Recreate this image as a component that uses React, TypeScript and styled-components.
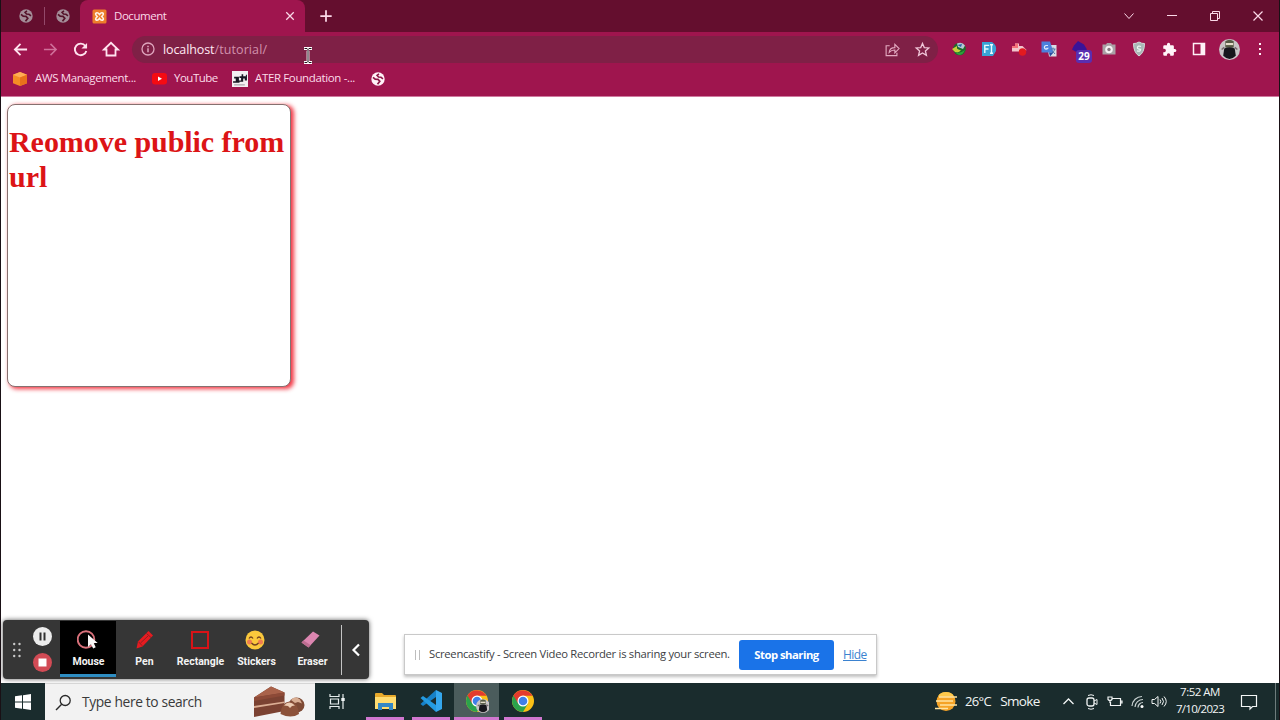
import React from "react";
import styled, { createGlobalStyle, css } from "styled-components";

const GlobalStyle = createGlobalStyle`
  * { box-sizing: border-box; }
  body { margin: 0; background: #fff; font-family: "Open Sans", "Noto Sans", sans-serif; }
`;

const Screen = styled.div`
  width: 1280px;
  height: 720px;
  display: flex;
  flex-direction: column;
  overflow: hidden;
  background: #fff;
  border-left: 1px solid #191015;
  border-right: 1px solid #191015;
`;

const Text = styled.span<{ $size?: number; $ls?: number; $w?: number; $color?: string }>`
  display: block;
  flex: none;
  white-space: pre;
  line-height: 1.3;
  font-size: ${(p) => p.$size ?? 12}px;
  letter-spacing: ${(p) => p.$ls ?? 0}px;
  font-weight: ${(p) => p.$w ?? 400};
  color: ${(p) => p.$color ?? "inherit"};
`;

const Cell = styled.div<{ $w?: number }>`
  width: ${(p) => p.$w ?? 30}px;
  height: 100%;
  flex: none;
  display: flex;
  align-items: center;
  justify-content: center;
  svg { display: block; flex: none; overflow: visible; }
`;

/* Browser chrome */
const TabStrip = styled.header`
  flex: none;
  height: 32px;
  display: flex;
  background: #640e2e;
  color: #fbd9e8;
`;
const PinnedTabs = styled.div`
  width: 79px;
  height: 32px;
  flex: none;
  display: flex;
  align-items: center;
  padding-left: 7px;
`;
const TabDivider = styled.div`
  width: 1px;
  height: 18px;
  background: #93496a;
`;
const ActiveTab = styled.div`
  width: 225px;
  height: 32px;
  flex: none;
  display: flex;
  align-items: center;
  padding-left: 12px;
  border-radius: 8px 8px 0 0;
  background: #9f154e;
`;
const TabTitle = styled.div`
  width: 178px;
  padding-left: 7px;
`;
const WindowControls = styled.div`
  margin-left: auto;
  display: flex;
`;
const Toolbar = styled.div`
  flex: none;
  height: 34px;
  display: flex;
  align-items: center;
  padding: 0 4px;
  background: #9f154e;
  color: #ffe3ef;
`;
const AddressBar = styled.div`
  width: 806px;
  height: 27px;
  margin: 0 6px;
  padding-right: 1px;
  flex: none;
  display: flex;
  align-items: center;
  border-radius: 14px;
  background: #7f2046;
  color: #e3a9c0;
`;
const Url = styled.div`
  display: flex;
  flex: 1;
  padding-top: 2px;
`;
const Bookmarks = styled.nav`
  flex: none;
  height: 31px;
  display: flex;
  align-items: center;
  padding: 0 0 5px 11px;
  background: #9f154e;
  border-bottom: 1px solid #cf7a9f;
  color: #fbdce9;
`;
const Bookmark = styled.div<{ $w: number }>`
  width: ${(p) => p.$w}px;
  flex: none;
  display: flex;
  align-items: center;
  gap: 7px;
  svg { display: block; flex: none; }
`;
const Extension = styled.div`
  position: relative;
  width: 30px;
  height: 34px;
  display: flex;
  align-items: center;
  justify-content: center;
`;
const Badge = styled.div`
  position: absolute;
  left: 12px;
  top: 18px;
  width: 16px;
  height: 13px;
  border-radius: 3px;
  background: #5a2eb0;
  color: #fff;
  font: 700 10px/13px "Open Sans", sans-serif;
  text-align: center;
`;

/* Page */
const Page = styled.main`
  flex: 1;
  display: flex;
  flex-direction: column;
  justify-content: space-between;
  background: #fff;
`;
const Card = styled.section`
  width: 284px;
  height: 283px;
  margin: 7px 0 0 6px;
  padding: 19px 0 0 1px;
  border: 1px solid #86706f;
  border-radius: 8px;
  background: #fff;
  box-shadow: 2.5px 1.5px 4px rgba(240, 20, 35, 0.85);
`;
const Heading = styled.h1`
  margin: 0;
  font: 700 30px/35px "Liberation Serif", serif;
  letter-spacing: -0.05px;
  color: #dc1416;
`;
const Floating = styled.div`
  display: flex;
  align-items: flex-start;
  height: 63px;
  padding-left: 2px;
`;
const RecorderBar = styled.div`
  width: 366px;
  height: 59px;
  flex: none;
  display: flex;
  align-items: center;
  border-radius: 4px;
  background: #363636;
  box-shadow: 0 0 5px rgba(0, 0, 0, 0.65);
  color: #fff;
`;
const RecordButtons = styled.div`
  width: 29px;
  height: 59px;
  display: flex;
  flex-direction: column;
  align-items: center;
  justify-content: center;
  gap: 7px;
  padding-right: 6px;
  padding-bottom: 1px;
`;
const Tool = styled.div<{ $active?: boolean }>`
  width: 56px;
  height: 56px;
  margin-bottom: 1px;
  padding-top: 8px;
  display: flex;
  flex-direction: column;
  align-items: center;
  gap: 4px;
  border-bottom: 3px solid transparent;
  svg { display: block; }
  ${(p) =>
    p.$active &&
    css`
      background: #000;
      border-bottom-color: #2e8dc2;
    `}
`;
const ToolName = styled.div`
  font: 700 10.5px/14px Roboto, sans-serif;
  padding-left: 1px;
  color: #f4f4f4;
`;
const ToolDivider = styled.div`
  width: 1px;
  height: 50px;
  margin-left: 1px;
  background: #c4c4c4;
`;
const SharingBar = styled.div`
  width: 473px;
  height: 41px;
  margin: 14px 0 0 35px;
  flex: none;
  display: flex;
  align-items: center;
  background: #fff;
  border: 1px solid #c9c9c9;
  box-shadow: 0 2px 3px rgba(0, 0, 0, 0.25);
  color: #3c4043;
`;
const Grip = styled.div`
  width: 5px;
  height: 10px;
  margin: 0 9px 0 10px;
  border: solid #bdbdbd;
  border-width: 0 1px;
`;
const SharingMessage = styled.div`
  width: 310px;
`;
const StopButton = styled.button`
  width: 95px;
  height: 30px;
  padding: 0;
  border: 0;
  border-radius: 3px;
  background: #1a73e8;
  color: #fff;
  font: 700 11.3px/30px "Open Sans", sans-serif;
  letter-spacing: -0.6px;
  letter-spacing: -0.5px;
`;
const HideLink = styled.a`
  margin-left: 9px;
  color: #3b82d0;
  text-decoration: underline;
  font-size: 12px;
  letter-spacing: -0.6px;
`;

/* Taskbar */
const Taskbar = styled.footer`
  flex: none;
  height: 37px;
  display: flex;
  background: #1a2c2d;
  color: #f2f5f5;
`;
const SearchBox = styled.div`
  width: 270px;
  height: 37px;
  flex: none;
  display: flex;
  align-items: center;
  padding: 0 8px 0 10px;
  background: #f2f2f2;
  border-top: 1px solid #d6d6d6;
  color: #3a3a3a;
`;
const SearchHint = styled.div`
  flex: 1;
  padding-left: 10px;
`;
const TaskApp = styled.div<{ $w: number; $active?: boolean; $gap: number }>`
  width: ${(p) => p.$w}px;
  height: 37px;
  margin-left: ${(p) => p.$gap}px;
  flex: none;
  display: flex;
  align-items: center;
  justify-content: center;
  border-bottom: 3px solid #d077cf;
  padding-top: 2px;
  background: ${(p) => (p.$active ? "#4b5c5c" : "transparent")};
`;
const Tray = styled.div`
  margin-left: auto;
  display: flex;
  align-items: center;
`;
const Clock = styled.div`
  width: 58px;
  display: flex;
  flex-direction: column;
  align-items: center;
  gap: 2px;
  padding-bottom: 1px;
`;
const PeekEdge = styled.div`
  width: 4px;
  height: 37px;
  border-left: 1px solid #6f7c7c;
`;

/* The I-beam pointer floats over the address bar. */
const Pointer = styled.div`
  position: absolute;
  left: 303px;
  top: 47px;
`;

const Svg = ({ s = 16, w, h, vb, children }: { s?: number; w?: number; h?: number; vb?: string; children: React.ReactNode }) => (
  <svg width={w ?? s} height={h ?? s} viewBox={vb ?? `0 0 ${w ?? s} ${h ?? s}`} fill="none" stroke="none">
    {children}
  </svg>
);

const Globe = ({ color, ink }: { color: string; ink: string }) => (
  <Svg s={14}>
    <circle cx="7" cy="7" r="6.7" fill={color} />
    <path d="M2 5.300L4.200 7.200 7 7.300 8.800 9.200 6.500 12.300" stroke={ink} strokeWidth="1.700" />
    <path d="M8 1.800L6 3.300 7.500 5 10 5.300 12 6.800" stroke={ink} strokeWidth="1.500" />
  </Svg>
);

const Line = ({ d, s = 16, sw = 1.5, color = "currentColor" }: { d: string; s?: number; sw?: number; color?: string }) => (
  <Svg s={s} vb="0 0 16 16">
    <path d={d} stroke={color} strokeWidth={sw} />
  </Svg>
);

const Portrait = ({ s = 20 }: { s?: number }) => (
  <Svg s={s} vb="0 0 20 20">
    <circle cx="10" cy="10" r="10" fill="#c9c4c6" />
    <path d="M6 2.2Q10-1 14 2.2V8H6z" fill="#555a45" />
    <path d="M6.5 3.8h7v2h-7z" fill="#e5ddcb" />
    <path d="M5 9q5-2.5 10 0l1 7q-6 6-12 0z" fill="#17161c" />
    <path d="M2.5 10l2.5-2M17.5 10L15 8" stroke="#756a6c" strokeWidth="1.5" />
  </Svg>
);

const Chrome = () => (
  <Svg s={24}>
    <circle cx="12" cy="12" r="11" fill="#fbc116" />
    <path d="M12 12L2.5 6.5A11 11 0 0 0 12 23l5-8.5z" fill="#2ba24c" />
    <path d="M2.5 6.5A11 11 0 0 1 21.5 6.7H12L7.3 14.7z" fill="#e33b2e" />
    <circle cx="12" cy="12" r="5.5" fill="#fff" />
    <circle cx="12" cy="12" r="4.3" fill="#3f7fe8" />
  </Svg>
);

const Extensions = () => (
  <>
    <Extension>
      <Svg s={16}>
        <circle cx="8.500" cy="8" r="6.300" fill="#1d6b2b" />
        <path d="M6 2.400q5-2.200 8 2l-2 3.500-5-2z" fill="#b8c9d4" />
        <path d="M6.500 4l4.500-1-1 3z" fill="#2565a5" />
        <path d="M1 8l5-3v2.500q2 1.500 4 1.500-2 3.500-6 2z" fill="#c9cf3a" />
        <path d="M4 11q5 2 10-2-3 7-8 4z" fill="#2fa238" />
      </Svg>
    </Extension>
    <Extension>
      <Svg s={16}>
        <path d="M1 1h10q5 3 4 9l-3 5H1z" fill="#38a2d4" />
        <path d="M3.800 12V4.400h4.400M3.800 8h3.700M10.500 4v8M9 3.700h3M9 12.300h3" stroke="#e9faff" strokeWidth="1.400" />
      </Svg>
    </Extension>
    <Extension>
      <Svg s={16}>
        <path d="M1 5h3V2.500h4V5h3.500l4 4-4 4-3-2.500H1z" fill="#f1c5cb" />
        <path d="M1 5h3V2.500h3V7H1z" fill="#f4717a" />
        <circle cx="11.500" cy="11" r="3.700" fill="#e21a20" />
      </Svg>
    </Extension>
    <Extension>
      <Svg s={16}>
        <path d="M6 4h9.500v11.500H8z" fill="#d9dde5" />
        <path d="M.5.5H9l3.500 11H.5z" fill="#4c80dc" />
        <path d="M7 4.500H5.200a1.800 1.800 0 1 0 1.500 2.800H5.300" stroke="#dce9ff" strokeWidth="1.200" />
        <path d="M9.500 8h5M12 6.500V8M13.800 8q-.6 3-3.300 4.500M11 9.500l3 3.500" stroke="#5179a8" />
        <path d="M8 11.500h4.500L9 15.500z" fill="#254aa0" />
      </Svg>
    </Extension>
    <Extension>
      <Svg s={18}>
        <path d="M8 1l6 3.500 3 5-8 4-7-4 2-4z" fill="#391399" />
      </Svg>
      <Badge>29</Badge>
    </Extension>
    <Extension>
      <Svg s={16}>
        <path d="M1.500 3.500H5L6 2h4l1 1.500h3.500v10h-13z" fill="#aaa1a6" />
        <circle cx="8" cy="8.500" r="3.800" fill="#f6f2f4" />
        <circle cx="8" cy="8.500" r="1.700" fill="#8a7680" />
      </Svg>
    </Extension>
    <Extension>
      <Svg s={16}>
        <path d="M8 1q3 1.800 5.500 1.500 0 9-5.500 12.500Q2.500 11.500 2.500 2.500 5 2.800 8 1z" fill="#a9b8b7" stroke="#d4dada" />
        <path d="M10 5.500q-3-1-3.500.8T9.600 8.300Q9.500 11 6 9.800" stroke="#edf7f3" strokeWidth="1.300" />
      </Svg>
    </Extension>
    <Extension>
      <Svg s={15} vb="0 0 24 24">
        <path fill="#fff4f9" d="M20.500 11H19V7a2 2 0 0 0-2-2h-4V3.500a2.500 2.500 0 0 0-5 0V5H4a2 2 0 0 0-2 2v3.800h1.500a2.700 2.700 0 0 1 0 5.400H2V20a2 2 0 0 0 2 2h3.800v-1.500a2.700 2.700 0 0 1 5.400 0V22H17a2 2 0 0 0 2-2v-4h1.500a2.500 2.500 0 0 0 0-5z" />
      </Svg>
    </Extension>
    <Extension>
      <Svg s={14}>
        <path d="M1.500 1.500h11v11h-11z" stroke="#fff0f7" strokeWidth="1.500" />
        <path d="M8.500 1.500h4v11h-4z" fill="#fff0f7" />
      </Svg>
    </Extension>
    <Extension>
      <Portrait s={21} />
    </Extension>
    <Extension>
      <Svg s={14}>
        <path d="M7 1h2v2H7zM7 6h2v2H7zM7 11h2v2H7z" fill="#fff0f7" />
      </Svg>
    </Extension>
  </>
);

export default function App() {
  return (
    <Screen>
      <GlobalStyle />
      <TabStrip>
        <PinnedTabs>
          <Cell $w={36}><Globe color="#a48d98" ink="#541329" /></Cell>
          <TabDivider />
          <Cell $w={35}><Globe color="#a48d98" ink="#541329" /></Cell>
        </PinnedTabs>
        <ActiveTab>
          <Svg s={15}>
            <rect x=".5" y=".5" width="14" height="14" rx="1.500" fill="#ed7e2b" />
            <path d="M4.200 4q1.500-1 3.300 1.500Q9.300 3 10.800 4T9.700 7.500q2.700 2.500 1.100 3.500T7.500 9.500Q5.700 12 4.200 11t1.100-3.500Q2.600 5 4.200 4z" stroke="#fff3e8" strokeWidth="1.600" />
          </Svg>
          <TabTitle><Text $size={11.500} $ls={-0.45}>Document</Text></TabTitle>
          <Line s={10} d="M2 2l12 12M14 2L2 14" sw={2} />
        </ActiveTab>
        <Cell $w={42}><Line s={14} d="M8 1.500v13M1.500 8h13" sw={2} /></Cell>
        <WindowControls>
          <Cell $w={43}><Svg w={10} h={7}><path d="M.5 .5L5 5.500 9.500.5" stroke="currentColor" /></Svg></Cell>
          <Cell $w={43}><Svg w={10} h={3}><path d="M0 .500h10" stroke="currentColor" /></Svg></Cell>
          <Cell $w={43}><Svg s={10}><path d="M.5 2.500h7v7h-7zM2.500 2.500v-2h7v7h-2" stroke="currentColor" /></Svg></Cell>
          <Cell $w={43}><Svg s={10}><path d="M.5.5l9 9M9.500.5l-9 9" stroke="currentColor" strokeWidth="1.200" /></Svg></Cell>
        </WindowControls>
      </TabStrip>
      <Toolbar>
        <Cell><Line d="M15 8H2.500M8 2L2 8l6 6" sw={1.900} s={15} /></Cell>
        <Cell><Line d="M1 8h12.500M8 2l6 6-6 6" sw={1.600} s={15} color="#d0709a" /></Cell>
        <Cell>
          <Svg s={15} vb="0 0 16 16">
            <path d="M13.200 4.200A6.200 6.200 0 1 0 14.200 9.500" stroke="currentColor" strokeWidth="2" />
            <path d="M15 1v6H9z" fill="currentColor" />
          </Svg>
        </Cell>
        <Cell $w={31}><Line d="M1 8.500L8 1.800l7 6.700H12.500V14.500h-9V8.500z" sw={1.800} s={16} /></Cell>
        <AddressBar>
          <Cell $w={31}>
            <Svg s={14}>
              <circle cx="7" cy="7" r="6" stroke="#dfa5bd" strokeWidth="1.300" />
              <path d="M7 6.200v4M7 3.700v1.500" stroke="#dfa5bd" strokeWidth="1.500" />
            </Svg>
          </Cell>
          <Url>
            <Text $size={12.500} $ls={-0.1} $color="#ffeaf3">localhost</Text>
            <Text $size={12.500} $ls={0.1} $color="#d291ac">/tutorial/</Text>
          </Url>
          <Cell><Line s={15} d="M5 4H1.200v10.500h11.500v-3M4.500 11q.5-5 6-5V2.500L15 7l-4.500 4.500V8.500Q7 8.300 4.500 11z" sw={1.200} /></Cell>
          <Cell><Line s={15} d="M8 1.500l1.900 4.400 4.800.4-3.600 3.200 1.100 4.700L8 11.700l-4.200 2.500 1.100-4.700L1.300 6.300l4.800-.4z" sw={1.400} color="#f0c6d8" /></Cell>
        </AddressBar>
        <Extensions />
      </Toolbar>
      <Bookmarks>
        <Bookmark $w={140}>
          <Svg s={16}>
            <path d="M8 1l7 2.800v8.400L8 15l-7-2.800V3.800z" fill="#f58d25" />
            <path d="M1 3.800l7 2.700 7-2.700L8 1z" fill="#ffad55" />
            <path d="M8 6.500V15l7-2.800V3.800z" fill="#e8711b" />
          </Svg>
          <Text $size={11.500} $ls={-0.38}>AWS Management...</Text>
        </Bookmark>
        <Bookmark $w={80}>
          <Svg w={15} h={12}>
            <rect width="15" height="11.500" rx="3" fill="#f50b12" />
            <path d="M6 3.500v4.500l4-2.200z" fill="#fff" />
          </Svg>
          <Text $size={11.500} $ls={-0.5}>YouTube</Text>
        </Bookmark>
        <Bookmark $w={139}>
          <Svg s={16} vb="0 0 15 15">
            <rect width="15" height="15" fill="#f3eff2" />
            <path d="M1 9.500h2.500V7H2V5.500h4.500V9h2V6.500H7V5h2V3h1.500v2H13V3.500h1V9h-2V7h-1.500v3H7v1H1z" fill="#171722" />
            <path d="M2 13h10" stroke="#9f9aa2" />
          </Svg>
          <Text $size={11.500} $ls={-0.36}>ATER Foundation -...</Text>
        </Bookmark>
        <Globe color="#fff1f7" ink="#8c1646" />
      </Bookmarks>
      <Page>
        <Card><Heading>Reomove public from url</Heading></Card>
        <Floating>
          <RecorderBar>
            <Cell $w={28}>
              <Svg w={8} h={14}>
                {[1, 7, 13].map((y) => (
                  <React.Fragment key={y}>
                    <circle cx="1.200" cy={y} r="1.200" fill="#c8c8c8" />
                    <circle cx="6.500" cy={y} r="1.200" fill="#c8c8c8" />
                  </React.Fragment>
                ))}
              </Svg>
            </Cell>
            <RecordButtons>
              <Svg s={19}>
                <circle cx="9.500" cy="9.500" r="9.500" fill="#ececec" />
                <path d="M7.500 5.500v8M11.500 5.500v8" stroke="#303030" strokeWidth="2" />
              </Svg>
              <Svg s={19}>
                <circle cx="9.500" cy="9.500" r="9.500" fill="#d24b55" />
                <path d="M5.500 5.500h8v8h-8z" fill="#fff" />
              </Svg>
            </RecordButtons>
            <Tool $active>
              <Svg s={22}>
                <circle cx="9" cy="10.500" r="8.300" stroke="#d9717b" strokeWidth="1.900" />
                <path d="M11 5.500v12.500l3-2.700 2.200 4.200 2.500-1.200-2-4.200h4z" fill="#f7f7f7" />
              </Svg>
              <ToolName>Mouse</ToolName>
            </Tool>
            <Tool>
              <Svg s={22}>
                <path d="M3.500 19.500L5 12.500 15.500 2l4.500 4.500L9.500 17.500z" fill="#e61b20" />
                <path d="M5.500 12.800l3.800 4M13.500 4.500l4.500 4M7.500 14l7.500-7" stroke="#8b2024" />
              </Svg>
              <ToolName>Pen</ToolName>
            </Tool>
            <Tool>
              <Svg s={22}><path d="M3 3h16v16H3z" stroke="#d81317" strokeWidth="2" /></Svg>
              <ToolName>Rectangle</ToolName>
            </Tool>
            <Tool>
              <Svg s={22}>
                <circle cx="10" cy="11" r="9.500" fill="#fac83c" />
                <circle cx="4.500" cy="13" r="2.500" fill="#ee7c52" />
                <circle cx="15.500" cy="13" r="2.500" fill="#ee7c52" />
                <path d="M4 9.500q2-3 4 0M12 9.500q2-3 4 0M6.500 14q3.500 4 7 0" stroke="#704020" strokeWidth="1.300" />
              </Svg>
              <ToolName>Stickers</ToolName>
            </Tool>
            <Tool>
              <Svg s={22}>
                <path d="M.5 13.500L12 2.500 18.500 6.500 7.500 18.500z" fill="#dc86b0" />
                <path d="M.5 13.500l2-2 7 4.500-2 2.500z" fill="#bc6d90" />
              </Svg>
              <ToolName>Eraser</ToolName>
            </Tool>
            <ToolDivider />
            <Cell $w={27}><Svg w={8} h={14}><path d="M7 1.500L1.500 7 7 12.500" stroke="#fff" strokeWidth="2.200" /></Svg></Cell>
          </RecorderBar>
          <SharingBar>
            <Grip />
            <SharingMessage><Text $size={11.250} $ls={-0.28}>Screencastify - Screen Video Recorder is sharing your screen.</Text></SharingMessage>
            <StopButton>Stop sharing</StopButton>
            <HideLink>Hide</HideLink>
          </SharingBar>
        </Floating>
      </Page>
      <Taskbar>
        <Cell $w={43}>
          <Svg s={16}><path d="M0 2.300l7-1v6.200H0zM8 1.200L16 0v7.500H8zM0 8.500h7v6.200l-7-1zM8 8.500h8V16l-8-1.200z" fill="#fff" /></Svg>
        </Cell>
        <Cell $w={1} />
        <SearchBox>
          <Svg s={17}>
            <circle cx="10.200" cy="6.500" r="5" stroke="#292929" strokeWidth="1.300" />
            <path d="M6.700 10.200L1 16" stroke="#292929" strokeWidth="1.400" />
          </Svg>
          <SearchHint><Text $size={13.800} $ls={-0.37}>Type here to search</Text></SearchHint>
          <Svg w={54} h={34}>
            <path d="M1 12.500L18 1.500l13.500 6V26L1 32z" fill="#7b4232" />
            <path d="M1 12.500L18 1.500l13.500 6z" fill="#a9624a" />
            <path d="M1 12.500l30.500-5v3L1 16z" fill="#8d4a37" />
            <path d="M1 21l30.500-4.500V18L1 23z" fill="#dcae94" />
            <ellipse cx="43.500" cy="20" rx="8" ry="7.500" fill="#7e4a35" />
            <path d="M38 15q4-4.500 9-.5l2 4-4-1.500-3 1z" fill="#d9ae93" />
            <path d="M27.500 29q1-12 9-12.500Q45 17 46 29q-8 5-18.500 0z" fill="#8c523a" />
            <path d="M31 20.500q5-6 11 0l-3 .5-2 2-2-2z" fill="#eccbb2" />
          </Svg>
        </SearchBox>
        <Cell $w={44}>
          <Svg w={17} h={15}>
            <path d="M1 0v2.500h9V0M1 15v-2.500h9V15M1.500 5h8v5h-8zM14 0v15" stroke="#e6eded" strokeWidth="1.200" />
            <path d="M12.300 4h3.400v3h-3.400z" fill="#f1f6f6" />
          </Svg>
        </Cell>
        <TaskApp $w={38} $gap={7}>
          <Svg w={21} h={19}>
            <path d="M0 2q0-1 1-1h6l2 2h11q1 0 1 1v13H0z" fill="#e7a92b" />
            <path d="M0 5h21v12H0z" fill="#ffdc70" />
            <path d="M3 11h15v7h-4v-3H7v3H3z" fill="#3387c6" />
          </Svg>
        </TaskApp>
        <TaskApp $w={38} $gap={8}>
          <Svg s={24}>
            <path d="M17 1l6 3v16l-6 3z" fill="#35a7ed" />
            <path d="M17 1L1.500 15l2.500 2L17 8z" fill="#1681c8" />
            <path d="M1.500 9L4 7l13 9v7z" fill="#249be1" />
          </Svg>
        </TaskApp>
        <TaskApp $w={45} $gap={4} $active>
          <Svg s={24}>
            <Chrome />
            <g transform="translate(11 10)"><Portrait s={14} /></g>
          </Svg>
        </TaskApp>
        <TaskApp $w={38} $gap={5}><Chrome /></TaskApp>
        <Tray>
          <Cell $w={32}>
            <Svg s={24}>
              <circle cx="12" cy="11.500" r="9.500" fill="#f5a326" />
              <path d="M4 6.500q1.500-4.500 8-4.500t8 4.500z" fill="#ffc94b" />
              <path d="M5 7h18M2 11h17M6 15h17M1 18.500h13" stroke="#ffe3a0" strokeWidth="1.400" />
            </Svg>
          </Cell>
          <Cell $w={32}><Text $size={13} $ls={-0.7}>26°C</Text></Cell>
          <Cell $w={52}><Text $size={13.500} $ls={-0.6}>Smoke</Text></Cell>
          <Cell $w={8} />
          <Cell $w={29}><Svg w={11} h={7}><path d="M.5 6l5-5 5 5" stroke="currentColor" strokeWidth="1.300" /></Svg></Cell>
          <Cell $w={18}>
            <Svg w={12} h={16}>
              <rect x="1" y="4" width="7" height="8" rx="2" stroke="currentColor" strokeWidth="1.300" />
              <path d="M8 7l3-1.500v5L8 9M2 1.500q3-1.500 6 0M2 14.500q3 1.500 6 0" stroke="currentColor" />
            </Svg>
          </Cell>
          <Cell $w={26}>
            <Svg w={15} h={11}>
              <path d="M5 2.500h8.500v7H3.500V6M14 5h1v2h-1" stroke="currentColor" strokeWidth="1.200" />
              <path d="M1 1v2.500q2 2 4 0V1zM3 4v3" stroke="currentColor" strokeWidth="1.200" />
            </Svg>
          </Cell>
          <Cell $w={20}>
            <Svg s={13}>
              <path d="M1 11A10 10 0 0 1 11 1.500M4 12A8 8 0 0 1 12 4.500M7 12.500A5 5 0 0 1 12 7.500" stroke="#c7d0d0" strokeWidth="1.200" />
              <circle cx="11" cy="11.500" r="1.500" fill="#fff" />
            </Svg>
          </Cell>
          <Cell $w={24}>
            <Svg w={16} h={13}>
              <path d="M1 4.500h2.500L7 1.500v10L3.500 8.500H1zM9 4.500q1.500 2 0 4M11 3q3 3.500 0 7M13 1.500q4.500 5 0 10" stroke="currentColor" />
            </Svg>
          </Cell>
          <Clock>
            <Text $size={11.500} $ls={-0.5}>7:52 AM</Text>
            <Text $size={11.500} $ls={-0.7}>7/10/2023</Text>
          </Clock>
          <Cell $w={39}>
            <Svg s={16}><path d="M.5 1.500h15v11h-4L9 15v-2.500H.5z" stroke="currentColor" strokeWidth="1.200" /></Svg>
          </Cell>
          <Cell $w={7} />
          <PeekEdge />
        </Tray>
      </Taskbar>
      <Pointer>
        <Svg w={10} h={17}>
          <path d="M1 1.500h3l1 1 1-1h3M1 15.500h3l1-1 1 1h3M5 2.500v12" stroke="#fff" strokeWidth="2.800" />
          <path d="M1.500 1.500H4l1 1 1-1h2.500M1.500 15.500H4l1-1 1 1h2.500M5 2.500v12" stroke="#21101a" />
        </Svg>
      </Pointer>
    </Screen>
  );
}
